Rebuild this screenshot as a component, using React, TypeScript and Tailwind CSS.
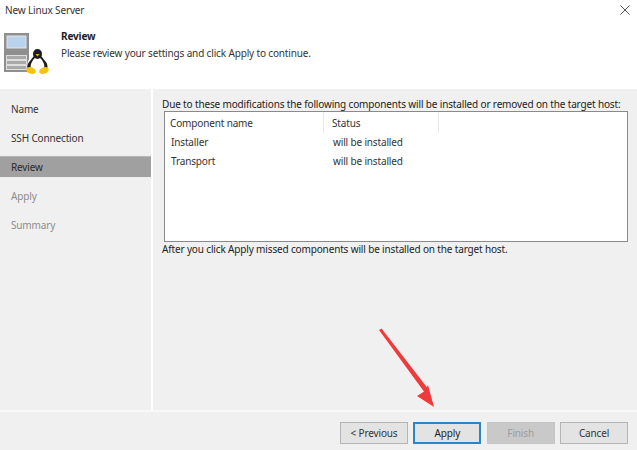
const font = "[font-family:'Noto_Sans',sans-serif]";

function ServerIcon() {
  return (
    <svg width="46" height="42" viewBox="0 0 46 42" className="shrink-0 mt-[2px]">
      <rect x="0" y="0" width="25" height="39" fill="#8f8f8f" />
      <rect x="3" y="3" width="19" height="12" fill="#b9d3ee" stroke="#e4e4e4" strokeWidth="1" />
      <rect x="2.5" y="22.5" width="20" height="4" fill="#a9a9a9" stroke="#dedede" />
      <rect x="2.5" y="27.5" width="20" height="4" fill="#a9a9a9" stroke="#dedede" />
      <rect x="2.5" y="32.5" width="20" height="4" fill="#a9a9a9" stroke="#dedede" />
      <ellipse cx="33.500" cy="31" rx="10" ry="9" fill="#ffffff" />
      <ellipse cx="33.500" cy="21" rx="4.500" ry="5" fill="#1c1c1c" />
      <path d="M30 23c-2 2-3 4-5 6-1.500 2-2 5-1 7l3 0c-1-3 0-6 1.500-8 1-2 3-4 5-4.500 2 .5 4 2.500 5 4.500 1.500 2 2.500 5 1.500 8l3 0c1-2 .5-5-1-7-2-2-3-4-5-6z" fill="#1c1c1c" />
      <path d="M31.500 21h4l-2 2.500z" fill="#e8b30f" />
      <ellipse cx="27" cy="37.500" rx="5" ry="3.200" fill="#f1c40f" transform="rotate(20 27 37.500)" />
      <ellipse cx="40" cy="37.500" rx="5" ry="3.200" fill="#f1c40f" transform="rotate(-20 40 37.500)" />
    </svg>
  );
}

function Step({ label, state }: { label: string; state?: "active" | "disabled" }) {
  const cls =
    state === "active"
      ? "bg-[#a0a0a0] text-[#2b2b2b] border-t border-[#b4b4b4]"
      : state === "disabled"
        ? "text-[#8c8c8c]"
        : "text-[#333333]";
  return <div className={`h-[21px] pl-[11px] mb-2 flex items-center ${cls}`}>{label}</div>;
}

function Btn({ label, kind }: { label: string; kind?: "focus" | "disabled" }) {
  const cls =
    kind === "focus"
      ? "border-2 border-[#2a86c8] bg-[#e3e3e3] text-[#222222]"
      : kind === "disabled"
        ? "border border-[#c6c6c6] bg-[#c9c9c9] text-[#9c9c9c]"
        : "border border-[#b4b4b4] bg-[#e3e3e3] text-[#333333]";
  return (
    <div className={`w-[68px] h-[22px] flex items-center justify-center ${cls}`}>{label}</div>
  );
}

export default function App() {
  return (
    <div className={`relative w-[637px] h-[450px] overflow-hidden bg-white flex flex-col text-[10px] tracking-[-0.15px] leading-none text-[#222222] ${font}`}>
      <div className="h-[20px] shrink-0 flex items-center justify-between pl-[5px] pr-[7px]">
        <span className="text-[#333333]">New Linux Server</span>
        <svg width="10" height="10" viewBox="0 0 10 10">
          <path d="M0.5 0.5l9 9M9.5 0.5l-9 9" stroke="#555555" strokeWidth="1" />
        </svg>
      </div>
      <div className="h-[69px] shrink-0 flex pl-1 pt-[11px]">
        <ServerIcon />
        <div className="ml-[11px] flex flex-col gap-[7px]">
          <span className="font-bold text-[#222222]">Review</span>
          <span className="text-[#333333]">Please review your settings and click Apply to continue.</span>
        </div>
      </div>
      <div className="flex-1 flex min-h-0">
        <div className="w-[151px] shrink-0 bg-[#f0f0f0] pt-[9px]">
          <Step label="Name" />
          <Step label="SSH Connection" />
          <Step label="Review" state="active" />
          <Step label="Apply" state="disabled" />
          <Step label="Summary" state="disabled" />
        </div>
        <div className="w-[2px] shrink-0 bg-white" />
        <div className="flex-1 bg-[#f0f0f0] pl-[9px] pr-[9px] pt-[8px] flex flex-col">
          <div className="h-[13px] mb-px flex items-center whitespace-nowrap">Due to these modifications the following components will be installed or removed on the target host:</div>
          <div className="ml-[2px] h-[131px] bg-white border border-[#8a8a8a] flex flex-col">
            <div className="h-[21px] flex items-center text-[#333333]">
              <div className="w-[159px] h-full pl-[5px] flex items-center border-r border-[#e8e8e8]">Component name</div>
              <div className="w-[115px] h-full pl-[8px] flex items-center border-r border-[#e8e8e8]">Status</div>
            </div>
            <div className="h-[19px] -mt-px flex items-center text-[#333333]">
              <div className="w-[159px] pl-[6px]">Installer</div>
              <div className="pl-[9px]">will be installed</div>
            </div>
            <div className="h-[19px] flex items-center text-[#333333]">
              <div className="w-[159px] pl-[6px]">Transport</div>
              <div className="pl-[9px]">will be installed</div>
            </div>
          </div>
          <div className="h-[13px] flex items-center whitespace-nowrap">After you click Apply missed components will be installed on the target host.</div>
        </div>
      </div>
      <div className="h-[40px] shrink-0 bg-[#f0f0f0] border-t-2 border-[#f8f8f8] flex justify-end items-start gap-[5.34px] pt-[10px] pr-[9px]">
        <Btn label="< Previous" />
        <Btn label="Apply" kind="focus" />
        <Btn label="Finish" kind="disabled" />
        <Btn label="Cancel" />
      </div>
      <svg className="absolute left-[370px] top-[320px]" width="80" height="95" viewBox="0 0 80 95">
        <path d="M9 10L11.500 8.500L59 70L55 73z" fill="#ee3a3a" />
        <path d="M64 87L58 65L55 71L47 76z" fill="#ee3a3a" />
      </svg>
    </div>
  );
}
